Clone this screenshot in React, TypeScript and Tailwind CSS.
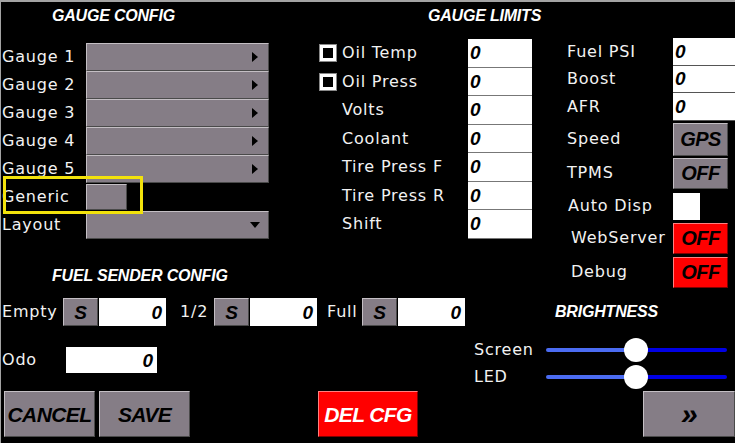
import React from "react";

const label = "text-[16px] tracking-[0.8px] text-[#f2f2f2] whitespace-nowrap leading-none";
const head =
  "font-['Liberation_Sans',sans-serif] font-bold italic text-[16px] text-white tracking-[-0.2px] whitespace-nowrap";
const zero = "font-['Liberation_Sans',sans-serif] font-black italic text-[19px] text-black leading-none";
const grayBtn =
  "bg-[#857d86] border-t border-l border-[#c4bfc4] border-b border-r border-b-[#4a4a4a] border-r-[#4a4a4a]";
const redBtn =
  "bg-[#ff0000] border-t border-l border-[#ff8080] border-b border-r border-b-[#800000] border-r-[#800000]";

function Dropdown({ down }: { down?: boolean }) {
  return (
    <div className={`${grayBtn} w-[183px] h-[28px] flex items-center justify-end pr-[8px]`}>
      {down ? (
        <svg width="10" height="6" viewBox="0 0 10 6">
          <polygon points="0,0 10,0 5,6" fill="#000" />
        </svg>
      ) : (
        <svg width="6" height="10" viewBox="0 0 6 10" className="mr-[2px]">
          <polygon points="0,0 6,5 0,10" fill="#000" />
        </svg>
      )}
    </div>
  );
}

function GaugeRow({ name, down }: { name: string; down?: boolean }) {
  return (
    <div className="flex items-center h-[28px]">
      <div className={`${label} w-[85px] pl-[1px]`}>{name}</div>
      <Dropdown down={down} />
    </div>
  );
}

function LimitRow({ name, check }: { name: string; check?: boolean }) {
  return (
    <div className="flex items-center h-[28.5px]">
      <div className="w-[20px]" />
      {check ? (
        <div className="w-[16px] h-[16px] bg-white p-[3px] outline outline-1 outline-[#888]">
          <div className="w-full h-full bg-black" />
        </div>
      ) : (
        <div className="w-[16px]" />
      )}
      <div className={`${label} w-[132px] pl-[6px]`}>{name}</div>
      <div className="w-[64px] h-full bg-white border-b border-[#777] flex items-center pl-[2px]">
        <span className={zero}>0</span>
      </div>
    </div>
  );
}

function RightInput({ name }: { name: string }) {
  return (
    <div className="flex items-center h-[27.5px]">
      <div className={`${label} w-[133px] pl-[27px]`}>{name}</div>
      <div className="w-[62px] h-full bg-white border-b border-[#555] flex items-center pl-[2px]">
        <span className={zero}>0</span>
      </div>
    </div>
  );
}

function ToggleRow({
  name,
  value,
  red,
  pl,
  h,
  mt,
}: {
  name: string;
  value: string;
  red?: boolean;
  pl: string;
  h: string;
  mt: string;
}) {
  return (
    <div className={`flex items-center ${h} ${mt}`}>
      <div className={`${label} w-[133px] ${pl}`}>{name}</div>
      <div
        className={`${red ? redBtn : grayBtn} w-[55px] h-full flex items-center justify-center`}
      >
        <span className="font-['Liberation_Sans',sans-serif] font-black italic text-[20px] text-black tracking-[-0.5px] leading-none">
          {value}
        </span>
      </div>
    </div>
  );
}

function SenderInput({ w }: { w: string }) {
  return (
    <div className={`${w} h-full bg-white flex items-center justify-end pr-[4px]`}>
      <span className={zero}>0</span>
    </div>
  );
}

function SButton() {
  return (
    <div className={`${grayBtn} w-[35px] h-full flex items-center justify-center mr-[1px]`}>
      <span className="font-['Liberation_Sans',sans-serif] font-black italic text-[19px] text-black leading-none">
        S
      </span>
    </div>
  );
}

function Slider() {
  return (
    <div className="relative w-[181px] h-[24px] flex items-center">
      <div className="w-[90px] h-[4px] rounded-l-full bg-[#4b6cf2]" />
      <div className="flex-1 h-[4px] rounded-r-full bg-[#0000e4]" />
      <div className="absolute left-[78px] top-0 w-[24px] h-[24px] rounded-full bg-white" />
    </div>
  );
}

function BigButton({
  text,
  red,
  w,
  cls,
  size,
}: {
  text: string;
  red?: boolean;
  w: string;
  cls?: string;
  size?: string;
}) {
  return (
    <div className={`${red ? redBtn : grayBtn} ${w} h-[46px] flex items-center justify-center ${cls ?? ""}`}>
      <span
        className={`font-['Liberation_Sans',sans-serif] font-black italic ${size ?? "text-[21px]"} tracking-[-0.6px] leading-none ${
          red ? "text-white" : "text-black"
        }`}
      >
        {text}
      </span>
    </div>
  );
}

export default function App() {
  return (
    <div className="w-[735px] h-[443px] bg-black border-t-2 border-l border-[#a3a3a3] overflow-hidden font-['DejaVu_Sans',sans-serif] flex flex-col">
      {/* headers */}
      <div className="flex items-center h-[28px]">
        <div className={`${head} w-[299px] pl-[51px]`}>GAUGE CONFIG</div>
        <div className={`${head} pl-[128px]`}>GAUGE LIMITS</div>
      </div>

      <div className="flex h-[260px]">
        {/* gauge config */}
        <div className="w-[299px] flex flex-col pt-[13px]">
          <GaugeRow name="Gauge 1" />
          <GaugeRow name="Gauge 2" />
          <GaugeRow name="Gauge 3" />
          <GaugeRow name="Gauge 4" />
          <GaugeRow name="Gauge 5" />
          <div className="relative flex items-center h-[28px]">
            <div className={`${label} w-[85px] pl-[1px]`}>Generic</div>
            <div className={`${grayBtn} w-[41px] h-[26px]`} />
            <div className="absolute left-[2px] top-[-7px] w-[140px] h-[38px] border-[3px] border-[#f2e20c]" />
          </div>
          <GaugeRow name="Layout" down />
          <div className={`${head} mt-[23px] h-[28px] flex items-center pl-[51px]`}>FUEL SENDER CONFIG</div>
        </div>

        {/* gauge limits */}
        <div className="w-[240px] flex flex-col pt-[9px]">
          <LimitRow name="Oil Temp" check />
          <LimitRow name="Oil Press" check />
          <LimitRow name="Volts" />
          <LimitRow name="Coolant" />
          <LimitRow name="Tire Press F" />
          <LimitRow name="Tire Press R" />
          <LimitRow name="Shift" />
        </div>

        {/* right column */}
        <div className="flex-1 flex flex-col pt-[8px]">
          <RightInput name="Fuel PSI" />
          <RightInput name="Boost" />
          <RightInput name="AFR" />
          <ToggleRow name="Speed" value="GPS" pl="pl-[27px]" h="h-[33px]" mt="mt-[2px]" />
          <ToggleRow name="TPMS" value="OFF" pl="pl-[27px]" h="h-[31px]" mt="mt-[2px]" />
          <div className="flex items-center h-[27px] mt-[4px]">
            <div className={`${label} w-[133px] pl-[28px]`}>Auto Disp</div>
            <div className="w-[27px] h-full bg-white" />
          </div>
          <ToggleRow name="WebServer" value="OFF" red pl="pl-[31px]" h="h-[31px]" mt="mt-[3px]" />
          <ToggleRow name="Debug" value="OFF" red pl="pl-[31px]" h="h-[31px]" mt="mt-[3px]" />
        </div>
      </div>

      {/* fuel sender + brightness */}
      <div className="flex h-[101px]">
        <div className="w-[470px] flex flex-col">
          <div className="flex items-center h-[28px] mt-[8px]">
            <div className={`${label} w-[62px] pl-[1px] tracking-[0.3px]`}>Empty</div>
            <SButton />
            <SenderInput w="w-[67px]" />
            <div className={`${label} w-[48px] pl-[14px] tracking-[0.3px]`}>1/2</div>
            <SButton />
            <SenderInput w="w-[67px]" />
            <div className={`${label} w-[45px] pl-[10px] tracking-[0.3px]`}>Full</div>
            <SButton />
            <SenderInput w="w-[67px]" />
          </div>
          <div className="flex items-center h-[26px] mt-[21px]">
            <div className={`${label} w-[65px] pl-[1px] tracking-[0.3px]`}>Odo</div>
            <SenderInput w="w-[91px]" />
          </div>
        </div>
        <div className="flex-1 flex flex-col">
          <div className={`${head} h-[28px] mt-[8px] flex items-center pl-[84px]`}>BRIGHTNESS</div>
          <div className="flex items-center h-[27px] mt-[10px]">
            <div className={`${label} w-[75px] pl-[3px]`}>Screen</div>
            <Slider />
          </div>
          <div className="flex items-center h-[27px]">
            <div className={`${label} w-[75px] pl-[3px]`}>LED</div>
            <Slider />
          </div>
        </div>
      </div>

      {/* bottom buttons */}
      <div className="flex h-[46px] pl-[3px]">
        <BigButton text="CANCEL" w="w-[91px]" />
        <BigButton text="SAVE" w="w-[91px]" cls="ml-[4px]" />
        <BigButton text="DEL CFG" red w="w-[100px]" cls="ml-[128px]" />
        <BigButton text="»" w="w-[92px]" cls="ml-auto" size="text-[30px]" />
      </div>
    </div>
  );
}
